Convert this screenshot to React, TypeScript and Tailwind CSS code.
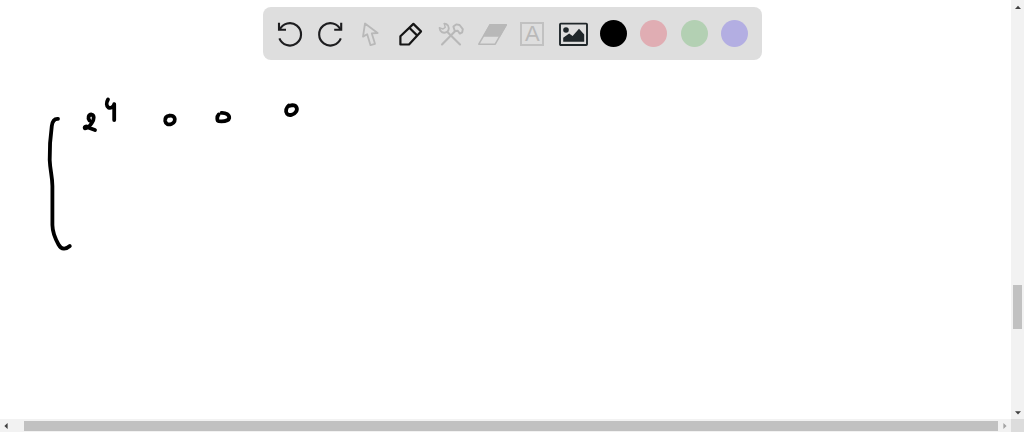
import { useState, type ReactNode } from "react";

const icon = "h-8 w-8 shrink-0";

function ToolButton({ label, disabled, children }: { label: string; disabled?: boolean; children: ReactNode }) {
  return (
    <button type="button" aria-label={label} disabled={disabled} className="flex h-8 w-8 items-center justify-center">
      {children}
    </button>
  );
}

const colors = [
  { name: "Black", tone: "bg-black" },
  { name: "Red", tone: "bg-[#e0adb3]" },
  { name: "Green", tone: "bg-[#b3d0b3]" },
  { name: "Purple", tone: "bg-[#b3aee2]" },
];

function Toolbar() {
  const [selected, setSelected] = useState("Black");
  return (
    <div role="toolbar" aria-label="Drawing tools" className="flex h-[53px] w-[499px] items-center justify-between rounded-lg bg-[#dedede] px-[11px]">
      <ToolButton label="Undo">
        <svg viewBox="0 0 32 32" className={icon} fill="none" stroke="#1d1d1f" strokeWidth="2.1">
          <path d="M5.4 20.4A11.2 11.2 0 1 0 5.6 11.8" />
          <path d="M5 4.8V11.8H12" />
        </svg>
      </ToolButton>
      <ToolButton label="Redo">
        <svg viewBox="0 0 32 32" className={icon} fill="none" stroke="#1d1d1f" strokeWidth="2.1">
          <path d="M26.8 20.4A11.2 11.2 0 1 1 26.6 11.8" />
          <path d="M27.2 4.8V11.8H20.2" />
        </svg>
      </ToolButton>
      <ToolButton label="Select" disabled>
        <svg viewBox="0 0 32 32" className={icon} fill="none" stroke="#b8b8b8" strokeWidth="1.8" strokeLinejoin="round">
          <path d="M11 5.5L9 18.6L13.2 16.2L16.5 27.2L21 25.8L17.8 15.4L23.6 15Z" />
        </svg>
      </ToolButton>
      <ToolButton label="Pen">
        <svg viewBox="0 0 32 32" className={icon} fill="none" stroke="#151515" strokeWidth="2.2" strokeLinejoin="round">
          <path d="M18.4 5.9L26 13.4L14 26.5H5.4V18.2Z" />
          <path d="M14.3 9.8L22.3 17.6" />
        </svg>
      </ToolButton>
      <ToolButton label="Tools" disabled>
        <svg viewBox="0 0 32 32" className={icon} fill="none" stroke="#b8b8b8" strokeWidth="1.9" strokeLinecap="round" strokeLinejoin="round">
          <path d="M4.6 10C4.8 14 8.2 15.6 11.6 14.2C14.6 12.4 14.6 8 11.4 6.2L9.4 5.6" />
          <path d="M4.6 9.8L8 11L10.2 9.4L9.4 5.8" strokeWidth="1.4" />
          <path d="M12.4 14L25 26.4" strokeWidth="2.1" />
          <path d="M7 26.4L19.8 13.4" strokeWidth="2.1" />
          <path d="M18.4 8.6L21.2 6.4L24.6 7L27.8 11.2L27.2 14.4L24.8 15.6L22.8 12.8L19.8 13Z" />
        </svg>
      </ToolButton>
      <ToolButton label="Eraser" disabled>
        <svg viewBox="0 0 32 32" className={icon} fill="none" stroke="#b8b8b8" strokeWidth="1.5" strokeLinejoin="round">
          <path d="M14 6.8H30.2L19.2 26.2H2.8Z" />
          <path d="M14 6.8H30.2L23.8 18H7.8Z" fill="#b8b8b8" />
        </svg>
      </ToolButton>
      <ToolButton label="Text" disabled>
        <span className="flex h-6 w-6 items-center justify-center border-2 border-[#c1c1c1] font-['Liberation_Sans',sans-serif] text-[22px] leading-none text-[#b9b9b9]">A</span>
      </ToolButton>
      <ToolButton label="Insert image">
        <svg viewBox="0 0 32 32" className={icon}>
          <rect x="3" y="5.6" width="27" height="21.4" rx="0.8" fill="none" stroke="#20272a" strokeWidth="1.9" />
          <circle cx="9" cy="12" r="2.8" fill="#20272a" />
          <path d="M6.2 23.8V19.8L12.2 15.6L15.6 18L22 10.8L27.2 16.4V23.8Z" fill="#20272a" />
        </svg>
      </ToolButton>
      {colors.map((c) => (
        <button
          key={c.name}
          type="button"
          aria-label={c.name}
          aria-pressed={selected === c.name}
          onClick={() => setSelected(c.name)}
          className="flex h-8 w-8 items-center justify-center"
        >
          <span className={`h-[27px] w-[27px] rounded-full ${c.tone}`} />
        </button>
      ))}
    </div>
  );
}

function Handwriting() {
  return (
    <svg aria-label="Handwritten matrix" className="absolute inset-0 h-full w-full" fill="none" stroke="#000" strokeWidth="3.8" strokeLinecap="round" strokeLinejoin="round">
      <path d="M58 118.8C54 118.5 52.4 121 51.8 126C50.4 136 49.4 147 49.7 160C50.2 171 52.3 176 52.4 186V225C52.5 231 56 240 58.5 244.5C61.5 250 66 249.4 69.8 246" />
      <path d="M89.5 120.5C87.5 118 88.5 114.8 91.5 114.5C94.5 115 94.3 119.5 91.8 123C89.8 126 87 128.6 84.8 128.4C84 126.4 86.5 125.6 89.5 128L95 130" />
      <path d="M108 99.5C106.2 102.5 106.4 106 108.4 107.5C110.5 108.6 113.4 107.2 114.2 104.2M114.2 104.2V120" />
      <path d="M169.5 115.6C166.3 115.8 164.9 118 165.2 121C165.7 124.4 168.5 125 171.5 124C174.5 123 175.6 120 174.4 117.6C173.4 115.8 171.5 115.2 168.8 115.8" />
      <path d="M218.6 114.6C216.8 116.5 216.8 120.8 218.8 121.2C223 121.5 228.5 121.2 229.2 118C229.5 114.8 226 112.6 221.5 112.8" />
      <path d="M288.6 105.6C286.3 107.5 285 111.5 287 113.8C289 116 294 115 296 111.8C298 108.5 296.5 105.3 292.5 105.2L288.2 106.2" />
    </svg>
  );
}

function Arrow({ label, className, path, color }: { label: string; className: string; path: string; color: string }) {
  return (
    <button type="button" tabIndex={-1} aria-label={label} className={`flex shrink-0 items-center justify-center ${className}`}>
      <svg viewBox="0 0 8 8" className="h-2 w-2" fill={color}>
        <path d={path} />
      </svg>
    </button>
  );
}

export default function App() {
  return (
    <div className="grid h-screen grid-cols-[1fr_13px] grid-rows-[1fr_13px] bg-white font-['Liberation_Sans',sans-serif]">
      <main className="relative overflow-hidden bg-white">
        <Handwriting />
      </main>
      <div className="flex flex-col items-center bg-[#f2f2f2]">
        <Arrow label="Scroll up" className="h-[13px] w-full" path="M1 6L4 2.8L7 6Z" color="#404040" />
        <div className="grow-[272]" />
        <div className="w-[9px] grow-[44] bg-[#c1c1c1]" />
        <div className="grow-[77]" />
        <Arrow label="Scroll down" className="h-[13px] w-full" path="M1 2.2H7L4 5.4Z" color="#404040" />
      </div>
      <div className="flex items-center bg-[#f2f2f2]">
        <Arrow label="Scroll left" className="h-full w-3" path="M5.6 1V7L2.4 4Z" color="#404040" />
        <div className="grow-[12]" />
        <div className="h-[10px] grow-[974] bg-[#c1c1c1]" />
        <Arrow label="Scroll right" className="h-full w-[13px]" path="M2.4 1L5.6 4L2.4 7Z" color="#a3a3a3" />
      </div>
      <div className="bg-[#dcdcdc]" />
      <div className="absolute inset-x-0 top-[7px] flex justify-center">
        <Toolbar />
      </div>
    </div>
  );
}
